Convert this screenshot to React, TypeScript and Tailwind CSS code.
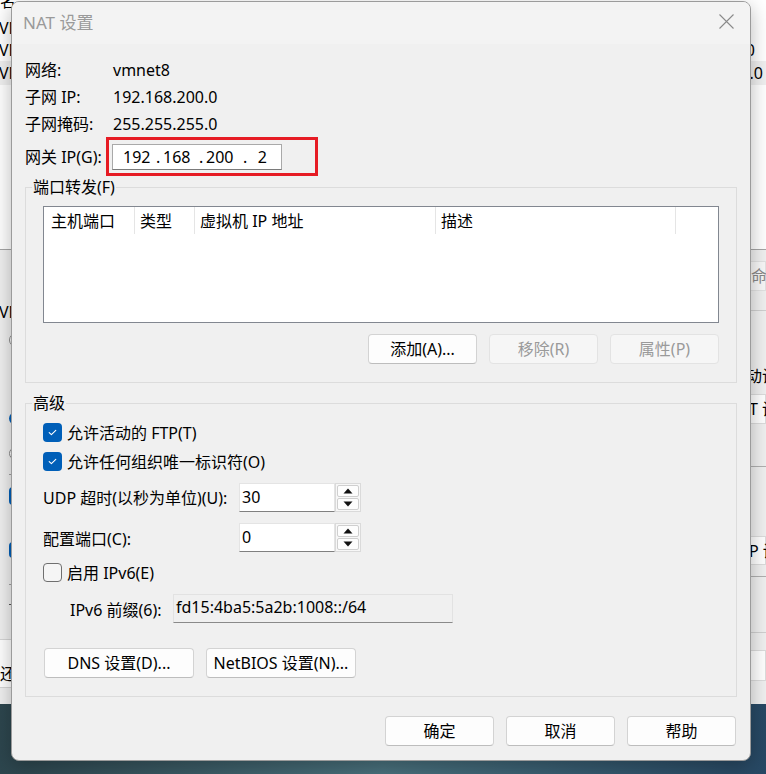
import React from 'react';

// Windows 11 style "NAT 设置" dialog over the Virtual Network Editor window

const CheckOn: React.FC = () => (
  <span className="flex h-[19px] w-[19px] shrink-0 items-center justify-center rounded-[4px] bg-[#005fb8]">
    <svg width="11" height="9" viewBox="0 0 11 9" fill="none">
      <path d="M2.2 4.6 L4.4 6.6 L8.8 2.4" stroke="white" strokeWidth="1.1" strokeLinecap="round" strokeLinejoin="round" />
    </svg>
  </span>
);

const CheckOff: React.FC = () => (
  <span className="h-[19px] w-[19px] shrink-0 rounded-[4px] border border-[#6f6f6f] bg-[#f5f5f5]" />
);

const Btn: React.FC<{ label: string; className: string; disabled?: boolean }> = ({
  label,
  className,
  disabled,
}) => (
  <div
    className={
      disabled
        ? `flex h-[30px] items-center justify-center rounded-[4px] border border-[#e3e3e3] bg-[#f6f6f6] text-[#9a9a9a] ${className}`
        : `flex h-[30px] items-center justify-center rounded-[4px] border border-[#d3d3d3] border-b-[#bdbdbd] bg-[#fdfdfd] text-black ${className}`
    }
  >
    {label}
  </div>
);

const Arrow: React.FC<{ up?: boolean }> = ({ up }) => (
  <svg width="10" height="6" viewBox="0 0 10 6">
    {up ? <path d="M5 0.5 L9.5 5.5 L0.5 5.5 Z" fill="#111" /> : <path d="M0.5 0.5 L9.5 0.5 L5 5.5 Z" fill="#111" />}
  </svg>
);

const SpinBox: React.FC<{ value: string }> = ({ value }) => (
  <div className="flex h-[29px]">
    <div className="flex w-[96px] items-center border border-[#e4e4e4] border-b-[#808080] bg-white px-[2px]">
      <span className="-mt-[2px]">{value}</span>
    </div>
    <div className="flex w-[26px] flex-col gap-[1px] border border-[#dadada] bg-[#f7f7f7] p-[1px]">
      <div className="flex flex-1 items-center justify-center rounded-[2px] border border-[#cfcfcf] bg-[#fdfdfd]">
        <Arrow up />
      </div>
      <div className="flex flex-1 items-center justify-center rounded-[2px] border border-[#cfcfcf] bg-[#fdfdfd]">
        <Arrow />
      </div>
    </div>
  </div>
);

const Dialog: React.FC = () => (
  <div className="absolute left-[11px] top-[1px] flex h-[760px] w-[740px] flex-col overflow-hidden rounded-[8px] border border-[#9b9b9b] bg-[#f0f0f0] text-[16px] leading-[20px] text-black shadow-[0_6px_20px_rgba(0,0,0,0.28)]">
    {/* title bar */}
    <div className="flex h-[42px] shrink-0 items-center justify-between bg-[#f3f3f3] pl-[11px] pr-[16px]">
      <span className="text-[17px] text-[#9a9a9a]">NAT 设置</span>
      <svg width="15" height="15" viewBox="0 0 15 15" className="-mt-[3px]">
        <path d="M0.5 0.5 L14.5 14.5 M14.5 0.5 L0.5 14.5" stroke="#8a8a8a" strokeWidth="1.1" />
      </svg>
    </div>

    <div className="flex flex-col px-[13px]">
      {/* info rows */}
      <div className="mt-[12px] flex h-[27px] items-center">
        <span className="w-[88px]">网络:</span>
        <span>vmnet8</span>
      </div>
      <div className="flex h-[27px] items-center">
        <span className="w-[88px]">子网 IP:</span>
        <span>192.168.200.0</span>
      </div>
      <div className="flex h-[27px] items-center">
        <span className="w-[88px]">子网掩码:</span>
        <span>255.255.255.0</span>
      </div>
      <div className="flex h-[39px] items-center">
        <span className="w-[81px]">网关 IP(G):</span>
        <div className="flex h-[39px] w-[212px] items-center border-[3px] border-[#e61b24] pl-[3px]">
          <div className="flex h-[26px] w-[170px] items-center border border-[#a9a9a9] border-b-[#7a7a7a] bg-white pl-[10px]">
            <span className="w-[33px]">192</span>
            <span className="w-[7px]">.</span>
            <span className="w-[36px]">168</span>
            <span className="w-[7px]">.</span>
            <span className="w-[37px]">200</span>
            <span className="w-[8px]">.</span>
            <span className="w-[16px] text-right">2</span>
          </div>
        </div>
      </div>

      {/* port forwarding group */}
      <div className="mt-[11px] flex flex-col border border-[#dcdcdc] px-[17px] pb-[18px]">
        <span className="-mt-[11px] -ml-[11px] self-start bg-[#f0f0f0] px-[1px] leading-[20px]">端口转发(F)</span>
        <div className="mt-[9px] h-[117px] border border-[#828790] bg-white">
          <div className="flex h-[27px]">
            <div className="flex w-[91px] items-center border-r border-[#e5e5e5] pl-[7px]">主机端口</div>
            <div className="flex w-[60px] items-center border-r border-[#e5e5e5] pl-[5px]">类型</div>
            <div className="flex w-[241px] items-center border-r border-[#e5e5e5] pl-[5px]">虚拟机 IP 地址</div>
            <div className="flex w-[240px] items-center border-r border-[#e5e5e5] pl-[5px]">描述</div>
          </div>
        </div>
        <div className="mt-[11px] flex justify-end gap-[12px]">
          <Btn label="添加(A)..." className="w-[109px]" />
          <Btn label="移除(R)" className="w-[109px]" disabled />
          <Btn label="属性(P)" className="w-[109px]" disabled />
        </div>
      </div>

      {/* advanced group */}
      <div className="mt-[20px] flex flex-col border border-[#dcdcdc] px-[17px] pb-[18px]">
        <span className="-mt-[11px] -ml-[11px] self-start bg-[#f0f0f0] px-[1px] leading-[20px]">高级</span>
        <div className="mt-[5px] flex h-[29px] items-center">
          <CheckOn />
          <span className="ml-[5px]">允许活动的 FTP(T)</span>
        </div>
        <div className="flex h-[29px] items-center">
          <CheckOn />
          <span className="ml-[5px]">允许任何组织唯一标识符(O)</span>
        </div>
        <div className="mt-[7px] flex h-[29px] items-center">
          <span className="w-[196px]">UDP 超时(以秒为单位)(U):</span>
          <SpinBox value="30" />
        </div>
        <div className="mt-[11px] flex h-[29px] items-center">
          <span className="w-[196px] pt-[2px]">配置端口(C):</span>
          <SpinBox value="0" />
        </div>
        <div className="mt-[6px] flex h-[29px] items-center">
          <CheckOff />
          <span className="ml-[5px]">启用 IPv6(E)</span>
        </div>
        <div className="mt-[7px] flex h-[29px] items-center pl-[27px]">
          <span className="w-[103px] pt-[2px]">IPv6 前缀(6):</span>
          <div className="flex h-[29px] w-[280px] items-center border border-[#e2e2e2] border-b-[#8a8a8a] bg-[#f0f0f0] px-[2px]">
            <span className="-mt-[4px]">fd15:4ba5:5a2b:1008::/64</span>
          </div>
        </div>
        <div className="mt-[25px] flex gap-[12px] pl-[1px]">
          <Btn label="DNS 设置(D)..." className="w-[150px]" />
          <Btn label="NetBIOS 设置(N)..." className="w-[150px]" />
        </div>
      </div>

      {/* dialog buttons */}
      <div className="mt-[19px] flex justify-end gap-[12px] pr-[1px]">
        <Btn label="确定" className="w-[109px]" />
        <Btn label="取消" className="w-[109px]" />
        <Btn label="帮助" className="w-[109px]" />
      </div>
    </div>
  </div>
);

export default function App() {
  return (
    <div className="relative h-[774px] w-[766px] overflow-hidden bg-white font-['Noto_Sans','Noto_Sans_CJK_SC',sans-serif] text-[16px] leading-[20px] text-black">
      {/* background: Virtual Network Editor, only the edges show */}
      <div className="flex h-[704px] flex-col">
        <div className="flex h-[249px] flex-col">
          <div className="h-[17px] overflow-hidden">
            <div className="-mt-[9px] flex">
              <span>名</span>
            </div>
          </div>
          <div className="flex h-[22px] items-center">
            <span className="-ml-[1px]">VM</span>
          </div>
          <div className="flex h-[22px] items-center justify-between">
            <span className="-ml-[1px]">VM</span>
            <span className="pr-[11px]">0</span>
          </div>
          <div className="flex h-[24px] items-center justify-between bg-[#f0f0f0]">
            <span className="-ml-[1px]">VM</span>
            <span className="pr-[3px]">.0</span>
          </div>
        </div>
        <div className="grid flex-1 grid-cols-2 border-t border-[#a5a5a5] bg-[#f0f0f0]">
          <div className="flex flex-col">
            <span className="mt-[52px] -ml-[1px]">VM</span>
            <span className="ml-[9px] mt-[11px] h-[14px] w-[14px] rounded-full border border-[#8a8a8a] bg-white" />
            <span className="ml-[9px] mt-[65px] h-[13px] w-[13px] rounded-full bg-[#005fb8]" />
            <span className="ml-[9px] mt-[22px] h-[13px] w-[13px] rounded-full border border-[#8a8a8a] bg-white" />
            <span className="ml-[9px] mt-[14px] h-px w-[40px] bg-[#a0a0a0]" />
            <span className="ml-[9px] mt-[12px] h-[18px] w-[18px] rounded-[4px] bg-[#005fb8]" />
            <span className="ml-[9px] mt-[37px] h-[16px] w-[16px] rounded-[4px] bg-[#005fb8]" />
            <span className="ml-[9px] mt-[26px] h-px w-[40px] bg-[#a0a0a0]" />
            <span className="ml-[9px] mt-[19px] h-px w-[20px] bg-[#555]" />
            <div className="mt-[34px] flex h-[49px] items-end border-y border-[#d5d5d5] bg-white pb-[3px]">
              <span>还</span>
            </div>
          </div>
          <div className="flex flex-col">
            <div className="mt-[11px] ml-[300px] flex h-[30px] items-center whitespace-nowrap border border-[#e2e2e2] bg-[#f8f8f8] pl-[67px] text-[#8a8a8a]">
              命令
            </div>
            <span className="mt-[19px] h-px bg-[#d0d0d0]" />
            <span className="ml-[363px] mt-[55px] whitespace-nowrap">动设</span>
            <div className="ml-[300px] mt-[8px] flex h-[30px] items-center whitespace-nowrap border border-[#dcdcdc] bg-white pl-[65px]">
              T 设
            </div>
            <span className="mt-[42px] h-px bg-[#b0b0b0]" />
            <div className="ml-[300px] mt-[69px] flex h-[29px] items-center whitespace-nowrap border border-[#dcdcdc] bg-white pl-[65px]">
              P 设
            </div>
            <span className="mt-[11px] h-px bg-[#b0b0b0]" />
            <span className="mt-[55px] h-px bg-[#d0d0d0]" />
            <div className="ml-[300px] mt-[17px] h-[31px] border border-[#dcdcdc] bg-white" />
          </div>
        </div>
      </div>
      <div className="h-[70px] bg-gradient-to-r from-[#2d464e] via-[#4a727e] to-[#274864]" />

      <Dialog />
    </div>
  );
}
